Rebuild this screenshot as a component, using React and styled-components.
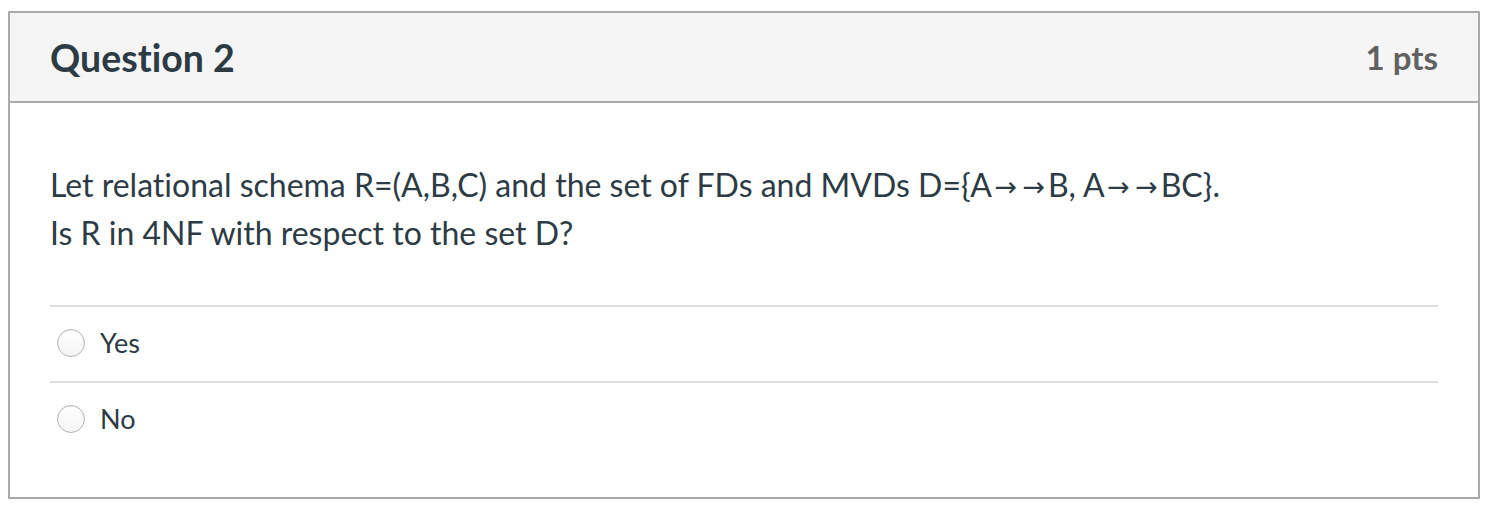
import React from 'react';
import styled, { createGlobalStyle } from 'styled-components';

const GlobalStyle = createGlobalStyle`
  html, body {
    margin: 0;
    padding: 0;
    background: #ffffff;
  }
  body {
    font-family: Lato, "Liberation Sans", sans-serif;
    font-variant-ligatures: none;
    color: #2d3b45;
  }
`;

const answers = ['Yes', 'No'];

const App = () => {
  return (
    <Page>
      <GlobalStyle />
      <Card>
        <Header>
          <Title>Question 2</Title>
          <Points>1 pts</Points>
        </Header>
        <Body>
          <QuestionText>
            Let relational schema R=(A,B,C) and the set of FDs and MVDs D={'{'}A<Arrow>→</Arrow><Arrow>→</Arrow>B, A<Arrow>→</Arrow><Arrow>→</Arrow>BC{'}'}.
            <br />
            Is R in 4NF with respect to the set D?
          </QuestionText>
          <AnswerList>
            {answers.map((label) => (
              <AnswerRow key={label}>
                <Radio type='radio' name='q2' />
                <AnswerLabel>{label}</AnswerLabel>
              </AnswerRow>
            ))}
          </AnswerList>
        </Body>
      </Card>
    </Page>
  );
};

const Page = styled.div`
  padding: 11px 12px 0 8px;
`;

const Card = styled.div`
  width: 1472px;
  box-sizing: border-box;
  border: 2px solid #aaaaaa;
  background: #ffffff;
`;

const Header = styled.div`
  display: flex;
  align-items: center;
  justify-content: space-between;
  height: 88px;
  padding: 0 40px 0 40px;
  background: #f5f5f5;
  border-bottom: 2px solid #aaaaaa;
`;

const Title = styled.h2`
  margin: 0;
  font-size: 37.5px;
  font-weight: 700;
  color: #2d3b45;
`;

const Points = styled.div`
  font-size: 33px;
  font-weight: 700;
  color: #616161;
`;

const Body = styled.div`
  padding: 58px 40px 40px;
`;

const QuestionText = styled.div`
  font-size: 32px;
  line-height: 48px;
  margin-bottom: 48px;
`;

const Arrow = styled.span`
  display: inline-block;
  width: 28px;
  text-align: center;
  font-family: "DejaVu Sans", sans-serif;
  font-size: 27px;
  line-height: 1;
  vertical-align: 1px;
  overflow: visible;
`;

const AnswerList = styled.div`
  display: flex;
  flex-direction: column;
`;

const AnswerRow = styled.label`
  display: flex;
  align-items: center;
  gap: 15px;
  padding: 16px 0 19px 7px;
  border-top: 2px solid #dddddd;
`;

const Radio = styled.input`
  appearance: none;
  margin: 0;
  width: 28px;
  height: 28px;
  border-radius: 50%;
  border: 1px solid #b4b4b4;
  background: linear-gradient(#ffffff, #f4f4f4);
  box-shadow: inset 0 1px 1px rgba(0, 0, 0, 0.06);
  box-sizing: border-box;
`;

const AnswerLabel = styled.span`
  font-size: 27px;
  line-height: 39px;
`;

export default App;
